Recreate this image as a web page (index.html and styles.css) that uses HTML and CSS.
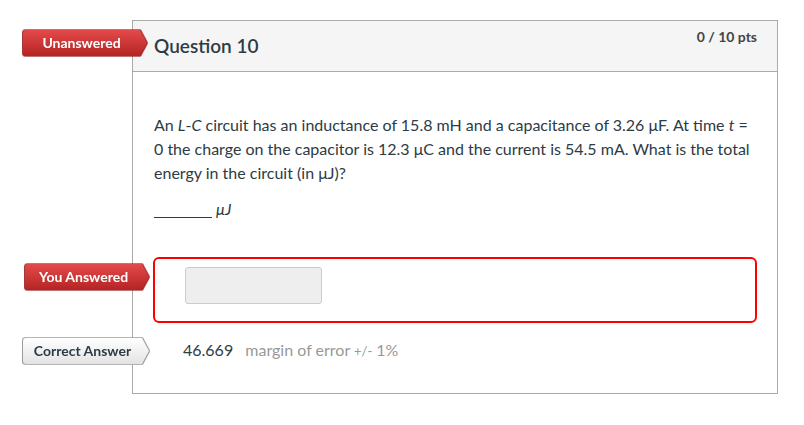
FILE: index.html
```html
<!DOCTYPE html>
<html lang="en">
<head>
  <meta charset="UTF-8">
  <meta name="viewport" content="width=device-width, initial-scale=1.0">
  <title>Question 10</title>
  <link rel="stylesheet" href="styles.css">
</head>
<body>

  <div class="quiz">
    <div class="question">

      <!-- header with status tag hanging off the left edge -->
      <div class="question-head">
        <div class="tag tag-red tag-unanswered"><span>Unanswered</span></div>
        <h2 class="question-name">Question 10</h2>
        <span class="points">0 / 10 pts</span>
      </div>

      <div class="question-body">
        <p class="question-text">
          An <em>L</em>-<em>C</em> circuit has an inductance of 15.8 mH and a capacitance of 3.26 &mu;F. At time <em>t</em> =
          0 the charge on the capacitor is 12.3 &mu;C and the current is 54.5 mA. What is the total
          energy in the circuit (in &mu;J)?
        </p>
        <p class="blank"><span class="blank-line"></span> <em>&mu;J</em></p>

        <div class="answer wrong">
          <div class="tag tag-red tag-you"><span>You Answered</span></div>
          <div class="answer-input"></div>
        </div>

        <div class="answer correct">
          <div class="tag tag-gray tag-correct"><span>Correct Answer</span></div>
          <span class="answer-value">46.669</span>
          <span class="margin">margin of error <small>+/-</small> 1%</span>
        </div>
      </div>

    </div>
  </div>

</body>
</html>
```

FILE: styles.css
```css
body {
  margin: 0;
  font-family: Lato, "Open Sans", sans-serif;
  color: #2d3b45;
  background: #fff;
}

.quiz {
  padding: 20px 0 0 132px;
}

.question {
  box-sizing: border-box;
  width: 646px;
  border: 1px solid #aaa;
  background: #fff;
}

/* Header */
.question-head {
  position: relative;
  display: flex;
  justify-content: space-between;
  align-items: flex-start;
  height: 50px;
  padding: 0 20px 0 21px;
  background: #f5f5f5;
  border-bottom: 1px solid #aaa;
}

.question-name {
  margin: 13px 0 0;
  font-size: 19px;
  line-height: 24px;
  font-weight: 600;
}

.points {
  margin-top: 7px;
  font-size: 14px;
  line-height: 18px;
  font-weight: bold;
  color: #444;
}

/* Body */
.question-body {
  padding: 41px 20px 30px 20px;
  font-size: 16px;
  line-height: 24px;
}

.question-text {
  margin: 0;
  padding-left: 1px;
}

.blank {
  margin: 12px 0 0;
  padding-left: 1px;
}

.blank-line {
  display: inline-block;
  width: 58px;
  border-bottom: 1px solid #2d3b45;
  vertical-align: -3px;
}

.answer {
  position: relative;
}

.answer.wrong {
  box-sizing: border-box;
  height: 66px;
  margin-top: 36px;
  padding: 8px 30px;
  border: 2px solid #f00;
  border-radius: 6px;
}

.answer-input {
  width: 137px;
  height: 37px;
  box-sizing: border-box;
  background: #eee;
  border: 1px solid #ccc;
  border-radius: 3px;
}

.answer.correct {
  margin-top: 15px;
  padding-left: 30px;
}

.answer-value {
  margin-right: 8px;
}

.margin {
  color: #999;
}

.margin small {
  font-size: 13px;
}

/* Arrow-shaped status tags */
.tag {
  position: absolute;
  filter: drop-shadow(1px 0 0 var(--tag-edge)) drop-shadow(-1px 0 0 var(--tag-edge))
          drop-shadow(0 1px 0 var(--tag-edge)) drop-shadow(0 -1px 0 var(--tag-edge));
}

.tag span {
  display: block;
  box-sizing: border-box;
  height: 100%;
  padding-right: 7px;
  border-radius: 3px 0 0 3px;
  font-size: 14px;
  line-height: 26px;
  font-weight: bold;
  text-align: center;
  clip-path: polygon(0 0, calc(100% - 7px) 0, 100% 50%, calc(100% - 7px) 100%, 0 100%);
}

.tag-red {
  --tag-edge: rgba(150, 25, 25, 0.6);
}

.tag-red span {
  color: #fff;
  background: linear-gradient(#e44a4a, #b42424);
}

.tag-gray {
  --tag-edge: rgba(150, 150, 150, 0.7);
}

.tag-gray span {
  color: #2d3b45;
  background: linear-gradient(#fff, #e3e3e3);
}

.tag-unanswered {
  left: -110px;
  top: 9px;
  width: 124px;
  height: 26px;
}

.tag-you {
  left: -130px;
  top: 5px;
  width: 124px;
  height: 26px;
}

.tag-correct {
  left: -130px;
  top: 0;
  width: 126px;
  height: 26px;
}
```
